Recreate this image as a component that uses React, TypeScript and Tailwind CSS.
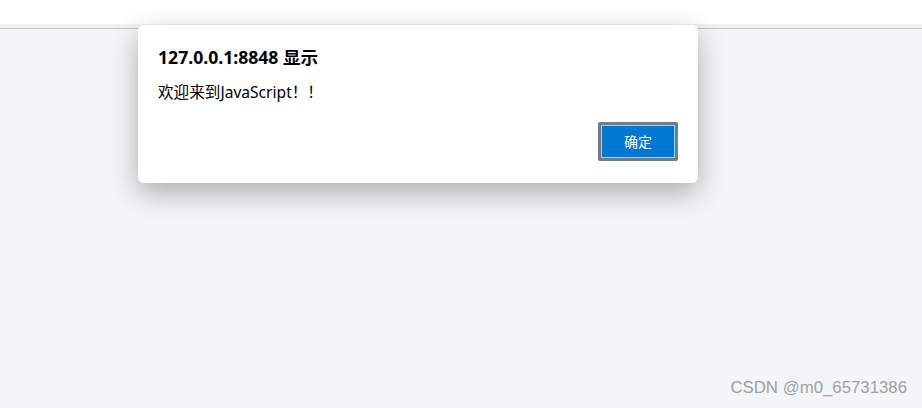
export default function App() {
  return (
    <div className="relative h-[408px] w-[922px] overflow-hidden bg-[#f4f5f7] font-['Noto_Sans_CJK_SC',sans-serif]">
      <div className="h-[24px] bg-white" />
      <div className="h-[5px] border-b border-[#c4c4c4] bg-[#f1f1f1]" />

      <div className="absolute left-[138px] top-[25px] flex h-[158px] w-[560px] flex-col rounded-[6px] bg-white px-[20px] pb-[22px] pt-[19px] shadow-[0_10px_28px_rgba(0,0,0,0.3)]">
        <div className="text-[17.6px] font-bold leading-[26px] text-black font-['Noto_Sans','Noto_Sans_CJK_SC',sans-serif]">
          127.0.0.1:8848 显示
        </div>
        <div className="mt-[11px] text-[15.6px] leading-[22px] text-black font-['Noto_Sans','Noto_Sans_CJK_SC',sans-serif]">
          欢迎来到JavaScript！！
        </div>
        <div className="mt-auto flex justify-end">
          <button className="flex h-[39px] w-[80px] items-center justify-center rounded-[2px] border-[3px] border-[#6f7d8a] bg-[#0078d4] text-[14px] text-white shadow-[inset_0_0_0_1px_#9fd0f5]">
            确定
          </button>
        </div>
      </div>

      <div className="absolute bottom-[8px] right-[15px] text-[16.8px] text-[#a0a0a0] font-['Liberation_Sans',sans-serif]">
        CSDN @m0_65731386
      </div>
    </div>
  );
}
